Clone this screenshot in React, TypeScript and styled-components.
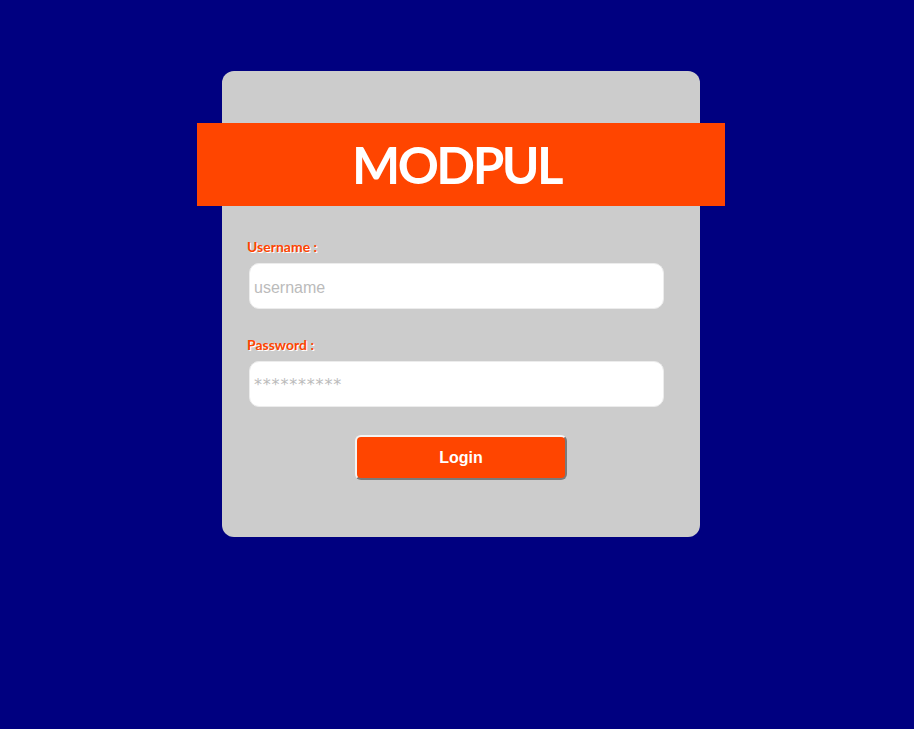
import React from "react";
import styled, { createGlobalStyle } from "styled-components";

const ORANGE = "#ff4500";

const GlobalStyle = createGlobalStyle`
  html, body {
    margin: 0;
    padding: 0;
    background-color: #000080;
  }
  body {
    font-family: "Liberation Sans", Arial, sans-serif;
  }
`;

const StyledPage = styled.main`
  min-height: 729px;
  display: flex;
  justify-content: center;
  align-items: flex-start;
  padding: 71px 0 0 8px;
  box-sizing: border-box;
`;

const StyledCard = styled.section`
  width: 478px;
  height: 466px;
  box-sizing: border-box;
  background-color: #cccccc;
  border-radius: 12px;
  padding: 52px 25px 0 25px;
`;

const StyledBanner = styled.header`
  margin: 0 -50px;
  height: 83px;
  background-color: ${ORANGE};
  display: flex;
  align-items: center;
  justify-content: center;

  h1 {
    margin: 0;
    padding-right: 9px;
    color: #ffffff;
    font-family: Lato, "Open Sans", sans-serif;
    font-weight: 700;
    font-size: 51px;
    letter-spacing: -2.5px;
    line-height: 1;
  }
`;

const StyledForm = styled.form`
  padding-top: 33px;

  .submit-row {
    display: flex;
    justify-content: center;
  }
`;

const StyledLabel = styled.label`
  display: block;
  height: 16px;
  line-height: 16px;
  font-family: Lato, "Open Sans", sans-serif;
  font-weight: 700;
  font-size: 14px;
  color: ${ORANGE};
  text-shadow: 1px 1px 0 #ffffff;
  margin-bottom: 8px;
`;

const StyledInput = styled.input<{ $masked?: boolean }>`
  display: block;
  width: 415px;
  height: 46px;
  box-sizing: border-box;
  margin: 0 0 28px 2px;
  padding: ${(p) => (p.$masked ? "0 0 0 4px" : "3px 0 0 4px")};
  border: 1px solid #ececec;
  border-radius: 10px;
  background: #ffffff;
  outline: none;
  caret-color: #444;
  font-family: ${(p) =>
    p.$masked ? '"DejaVu Sans", sans-serif' : '"Liberation Sans", Arial, sans-serif'};
  font-size: 16px;
  letter-spacing: ${(p) => (p.$masked ? "0.8px" : "0")};
  color: #333;

  &::placeholder {
    color: #bbbbbb;
  }
`;

const StyledButton = styled.button`
  width: 212px;
  height: 45px;
  box-sizing: border-box;
  border: 2px solid;
  border-color: #f4f4f4 #7a7a7a #7a7a7a #f4f4f4;
  border-radius: 6px;
  background-color: ${ORANGE};
  color: #ffffff;
  font-family: "Liberation Sans", Arial, sans-serif;
  font-weight: 700;
  font-size: 16px;
  cursor: pointer;
`;

const App = () => {
  const [username, setUsername] = React.useState("");
  const [password, setPassword] = React.useState("");

  const handleSubmit = (e: React.SyntheticEvent) => {
    e.preventDefault();
  };

  return (
    <>
      <GlobalStyle />
      <StyledPage>
        <StyledCard>
          <StyledBanner>
            <h1>MODPUL</h1>
          </StyledBanner>
          <StyledForm onSubmit={handleSubmit}>
            <StyledLabel htmlFor="username">Username :</StyledLabel>
            <StyledInput
              id="username"
              name="username"
              placeholder="username"
              autoFocus
              value={username}
              onChange={(e) => setUsername(e.target.value)}
            />
            <StyledLabel htmlFor="password">Password :</StyledLabel>
            <StyledInput
              id="password"
              name="password"
              type="password"
              placeholder="**********"
              $masked
              value={password}
              onChange={(e) => setPassword(e.target.value)}
            />
            <div className="submit-row">
              <StyledButton type="submit">Login</StyledButton>
            </div>
          </StyledForm>
        </StyledCard>
      </StyledPage>
    </>
  );
};

export default App;
